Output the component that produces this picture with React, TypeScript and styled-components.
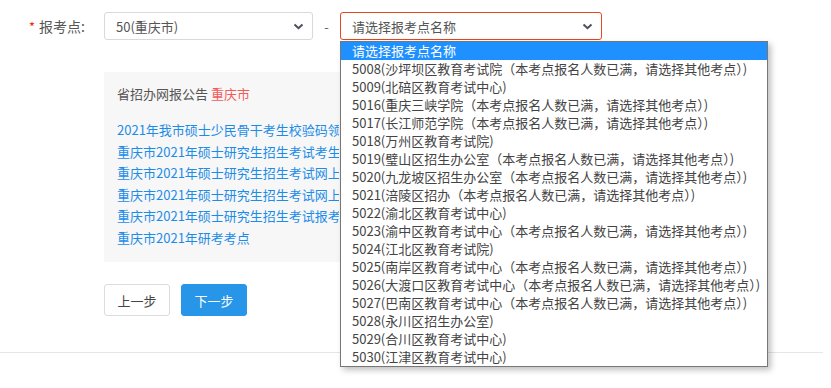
import React from "react";
import styled, { createGlobalStyle } from "styled-components";

const GlobalStyle = createGlobalStyle`
  html, body {
    margin: 0;
    min-height: 100%;
    background: #fff;
    font-family: "Noto Sans CJK SC", "Noto Sans", sans-serif;
    color: #555;
  }
`;

const Page = styled.div`
  width: 823px;
  min-height: 388px;
  box-sizing: border-box;
  padding-top: 12px;
  position: relative;
`;

const FormRow = styled.div`
  display: flex;
  align-items: center;
  height: 28px;
`;

const Label = styled.label`
  width: 104px;
  box-sizing: border-box;
  padding-right: 19px;
  text-align: right;
  font-size: 14px;
  color: #555;
`;

const Star = styled.span`
  color: #f0280a;
  margin-right: 4px;
  font-size: 13px;
`;

const SelectBox = styled.div<{ $active?: boolean; $width: number }>`
  position: relative;
  width: ${(p) => p.$width}px;
  height: 28px;
  box-sizing: border-box;
  border: 1px solid ${(p) => (p.$active ? "#e8461e" : "#d9d9d9")};
  border-radius: 3px;
  background: #fff;
  display: flex;
  align-items: center;
  justify-content: space-between;
  padding: 0 8px 0 11px;
  font-size: 13px;
  color: #555;
`;

const Dash = styled.span`
  width: 27px;
  text-align: center;
  font-size: 13px;
  color: #666;
`;

const Dropdown = styled.ul`
  position: absolute;
  top: 28px;
  left: -1px;
  width: 428px;
  margin: 0;
  padding: 0;
  list-style: none;
  box-sizing: border-box;
  border: 1px solid #777;
  background: #fff;
  box-shadow: 3px 3px 6px rgba(0, 0, 0, 0.25);
  z-index: 10;
`;

const Option = styled.li<{ $selected?: boolean }>`
  height: 18px;
  line-height: 18px;
  padding-left: 11px;
  font-size: 13px;
  white-space: nowrap;
  color: ${(p) => (p.$selected ? "#fff" : "#444")};
  background: ${(p) => (p.$selected ? "#1e90ff" : "transparent")};
`;

const Notice = styled.div`
  margin: 32px 0 0 104px;
  width: 600px;
  height: 190px;
  box-sizing: border-box;
  background: #f7f7f7;
  padding: 13px 13px;
`;

const NoticeTitle = styled.div`
  font-size: 13px;
  line-height: 18px;
  color: #555;
  margin-bottom: 16px;
`;

const City = styled.span`
  color: #f25a5a;
`;

/* the open list covers the right part of each line, so clip there */
const LinkItem = styled.a`
  display: block;
  width: 222px;
  overflow: hidden;
  white-space: nowrap;
  font-size: 13px;
  line-height: 21.6px;
  color: #1c8ce8;
  text-decoration: none;
`;

const Buttons = styled.div`
  display: flex;
  gap: 11px;
  margin: 22px 0 0 104px;
`;

const Button = styled.button<{ $primary?: boolean }>`
  height: 32px;
  width: 66px;
  border-radius: 3px;
  font-family: inherit;
  font-size: 13px;
  border: 1px solid ${(p) => (p.$primary ? "#2796e8" : "#dcdcdc")};
  background: ${(p) => (p.$primary ? "#2796e8" : "#fff")};
  color: ${(p) => (p.$primary ? "#fff" : "#444")};
`;

const Divider = styled.div`
  margin-top: 36px;
  height: 1px;
  background: #e6e6e6;
`;

const Chevron = () => (
  <svg width="11" height="7" viewBox="0 0 11 7">
    <polyline points="1.5,1.5 5.5,5.2 9.5,1.5" fill="none" stroke="#4a4f5a" strokeWidth="2" />
  </svg>
);

const options = [
  "5008(沙坪坝区教育考试院（本考点报名人数已满，请选择其他考点）)",
  "5009(北碚区教育考试中心)",
  "5016(重庆三峡学院（本考点报名人数已满，请选择其他考点）)",
  "5017(长江师范学院（本考点报名人数已满，请选择其他考点）)",
  "5018(万州区教育考试院)",
  "5019(璧山区招生办公室（本考点报名人数已满，请选择其他考点）)",
  "5020(九龙坡区招生办公室（本考点报名人数已满，请选择其他考点）)",
  "5021(涪陵区招办（本考点报名人数已满，请选择其他考点）)",
  "5022(渝北区教育考试中心)",
  "5023(渝中区教育考试中心（本考点报名人数已满，请选择其他考点）)",
  "5024(江北区教育考试院)",
  "5025(南岸区教育考试中心（本考点报名人数已满，请选择其他考点）)",
  "5026(大渡口区教育考试中心（本考点报名人数已满，请选择其他考点）)",
  "5027(巴南区教育考试中心（本考点报名人数已满，请选择其他考点）)",
  "5028(永川区招生办公室)",
  "5029(合川区教育考试中心)",
  "5030(江津区教育考试中心)",
];

const links = [
  "2021年我市硕士少民骨干考生校验码领取通知",
  "重庆市2021年硕士研究生招生考试考生报名须知",
  "重庆市2021年硕士研究生招生考试网上支付说明",
  "重庆市2021年硕士研究生招生考试网上支付指南",
  "重庆市2021年硕士研究生招生考试报考要求",
  "重庆市2021年研考考点",
];

export default function App() {
  return (
    <Page>
      <GlobalStyle />
      <FormRow>
        <Label>
          <Star>*</Star>报考点:
        </Label>
        <SelectBox $width={209}>
          <span>50(重庆市)</span>
          <Chevron />
        </SelectBox>
        <Dash>-</Dash>
        <SelectBox $width={262} $active>
          <span>请选择报考点名称</span>
          <Chevron />
          <Dropdown>
            <Option $selected>请选择报考点名称</Option>
            {options.map((o) => (
              <Option key={o}>{o}</Option>
            ))}
          </Dropdown>
        </SelectBox>
      </FormRow>
      <Notice>
        <NoticeTitle>
          省招办网报公告 <City>重庆市</City>
        </NoticeTitle>
        {links.map((l) => (
          <LinkItem key={l} href="#">
            {l}
          </LinkItem>
        ))}
      </Notice>
      <Buttons>
        <Button>上一步</Button>
        <Button $primary>下一步</Button>
      </Buttons>
      <Divider />
    </Page>
  );
}
